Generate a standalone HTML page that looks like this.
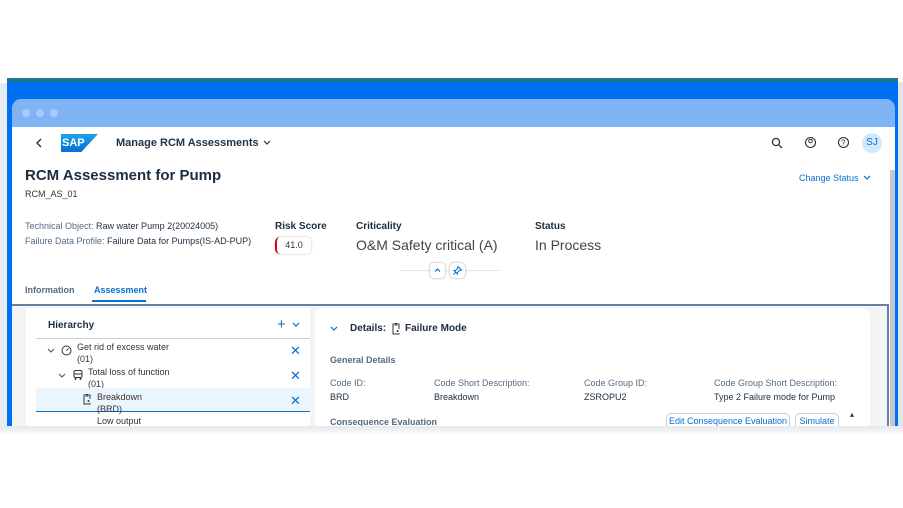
<!DOCTYPE html>
<html><head><style>
*{margin:0;padding:0;box-sizing:border-box}
body{width:903px;height:508px;background:#fff;position:relative;overflow:hidden;font-family:"Liberation Sans",Arial,sans-serif;color:#1d2d3e}
.a{position:absolute}
.lbl{font-size:9px;color:#556b82}
.val{font-size:9px;color:#1d2d3e}
.x{color:#0a6ed1;font-size:13px}
</style></head><body>
<div class="a" style="left:0;top:83px;width:8px;height:345px;background:#e8ecf0"></div>
<div class="a" style="left:7px;top:78px;width:891px;height:4px;background:#1a7a8a"></div>
<div class="a" style="left:7px;top:82px;width:891px;height:344px;background:#0070f2"></div>
<div class="a" style="left:898px;top:82px;width:5px;height:344px;background:#dfe5ec"></div>
<div class="a" style="left:12px;top:99px;width:883px;height:28px;background:#80b3f3;border-radius:9px 9px 0 0"></div>
<div class="a" style="left:22px;top:109px;width:8px;height:8px;border-radius:50%;background:#a9caf6"></div>
<div class="a" style="left:36px;top:109px;width:8px;height:8px;border-radius:50%;background:#a9caf6"></div>
<div class="a" style="left:50px;top:109px;width:8px;height:8px;border-radius:50%;background:#a9caf6"></div>
<div class="a" style="left:12px;top:127px;width:883px;height:299px;background:#fff"></div>
<div class="a" style="left:890px;top:170px;width:5px;height:256px;background:#c4c8cc"></div>
<!-- shell -->
<svg class="a" style="left:35px;top:138px" width="8" height="10"><path d="M6 1L2 5L6 9" fill="none" stroke="#333" stroke-width="1.4"/></svg>
<div class="a" style="left:61px;top:134px;width:37px;height:18px;background:linear-gradient(#1ba4e8,#0a6ed1);clip-path:polygon(0 0,100% 0,55% 100%,0 100%);color:#fff;font-weight:bold;font-size:11px;padding:3px 0 0 1px">SAP</div>
<div class="a" style="left:116px;top:137px;font-size:11px;font-weight:bold;color:#223548;white-space:nowrap">Manage RCM Assessments</div>
<svg class="a" style="left:263px;top:140px" width="8" height="6"><path d="M1 1L4 4L7 1" fill="none" stroke="#333" stroke-width="1.2"/></svg>
<svg class="a" style="left:771px;top:137px" width="12" height="12"><circle cx="5" cy="5" r="3.6" fill="none" stroke="#333" stroke-width="1.3"/><line x1="8" y1="8" x2="11" y2="11" stroke="#333" stroke-width="1.3"/></svg>
<svg class="a" style="left:804px;top:136px" width="13" height="13"><circle cx="6.5" cy="6.5" r="5" fill="none" stroke="#333" stroke-width="1.1"/><circle cx="6.5" cy="5" r="1.8" fill="none" stroke="#333"/></svg>
<svg class="a" style="left:837px;top:136px" width="13" height="13"><circle cx="6.5" cy="6.5" r="5" fill="none" stroke="#333" stroke-width="1.1"/><text x="4" y="9.5" font-size="8" fill="#333" font-family="Liberation Sans">?</text></svg>
<div class="a" style="left:862px;top:133px;width:20px;height:20px;border-radius:50%;background:#d1e8ff;color:#0a6ed1;font-size:10px;text-align:center;line-height:20px">SJ</div>
<!-- header -->
<div class="a" style="left:25px;top:167px;font-size:15px;font-weight:bold;color:#1d2d3e">RCM Assessment for Pump</div>
<div class="a" style="left:25px;top:189px;font-size:9px;color:#333">RCM_AS_01</div>
<div class="a" style="left:799px;top:173px;font-size:9px;color:#0a6ed1">Change Status</div>
<svg class="a" style="left:863px;top:175px" width="8" height="6"><path d="M1 1L4 4L7 1" fill="none" stroke="#0a6ed1" stroke-width="1.2"/></svg>
<div class="a lbl" style="left:25px;top:221px">Technical Object: <span class="val">Raw water Pump 2(20024005)</span></div>
<div class="a lbl" style="left:25px;top:236px">Failure Data Profile: <span class="val">Failure Data for Pumps(IS-AD-PUP)</span></div>
<div class="a" style="left:275px;top:221px;font-size:10px;font-weight:bold">Risk Score</div>
<div class="a" style="left:275px;top:237px;width:36px;height:17px;border-radius:5px;border-left:2px solid #d20a0a;box-shadow:0 0 2px #bbb;font-size:9px;text-align:center;line-height:17px;color:#333">41.0</div>
<div class="a" style="left:356px;top:221px;font-size:10px;font-weight:bold">Criticality</div>
<div class="a" style="left:356px;top:237px;font-size:14px;color:#444">O&amp;M Safety critical (A)</div>
<div class="a" style="left:535px;top:221px;font-size:10px;font-weight:bold">Status</div>
<div class="a" style="left:535px;top:237px;font-size:14px;color:#444">In Process</div>
<div class="a" style="left:400px;top:270px;width:100px;height:1px;background:#e5e5e5"></div>
<div class="a" style="left:430px;top:263px;width:15px;height:15px;border-radius:4px;background:#fff;box-shadow:0 0 2px #999"><svg width="15" height="15"><path d="M5 8.5L7.5 6L10 8.5" fill="none" stroke="#0a6ed1" stroke-width="1.2"/></svg></div>
<div class="a" style="left:450px;top:263px;width:15px;height:15px;border-radius:4px;background:#fff;box-shadow:0 0 2px #999"><svg width="15" height="15"><path d="M8 3.5L11.5 7L9.5 7.5L7.5 9.5L7.5 11L4 7.5L5.5 7.5L7.5 5.5Z M5.7 9.3L3.5 11.5" fill="none" stroke="#0a6ed1" stroke-width="1"/></svg></div>
<div class="a" style="left:25px;top:285px;font-size:9px;font-weight:bold;color:#556b82">Information</div>
<div class="a" style="left:94px;top:285px;font-size:9px;font-weight:bold;color:#0a6ed1">Assessment</div>
<div class="a" style="left:92px;top:300px;width:54px;height:2px;background:#0a6ed1"></div>
<div class="a" style="left:12px;top:304px;width:877px;height:2px;background:#6a7fa6"></div>
<div class="a" style="left:887px;top:304px;width:2px;height:122px;background:#6a7fa6"></div>
<!-- panels -->
<div class="a" style="left:12px;top:306px;width:875px;height:120px;background:#f3f4f6"></div>
<div class="a" style="left:26px;top:308px;width:284px;height:118px;background:#fff"></div>
<div class="a" style="left:315px;top:308px;width:555px;height:118px;background:#fff;border-radius:8px 8px 0 0"></div>
<div class="a" style="left:48px;top:320px;font-size:10px;font-weight:bold">Hierarchy</div>
<div class="a" style="left:277px;top:316px;font-size:15px;color:#0a6ed1">+</div>
<svg class="a" style="left:292px;top:322px" width="8" height="6"><path d="M1 1L4 4L7 1" fill="none" stroke="#0a6ed1" stroke-width="1.2"/></svg>
<div class="a" style="left:36px;top:338px;width:274px;height:1px;background:#ccc"></div>
<svg class="a" style="left:47px;top:348px" width="8" height="6"><path d="M1 1L4 4L7 1" fill="none" stroke="#555" stroke-width="1.1"/></svg>
<svg class="a" style="left:61px;top:345px" width="11" height="11"><circle cx="5.5" cy="5.5" r="4.5" fill="none" stroke="#333"/><line x1="5.5" y1="5.5" x2="7.5" y2="3.5" stroke="#333"/></svg>
<div class="a" style="left:77px;top:341px;font-size:9px;color:#333;line-height:12px">Get rid of excess water<br>(01)</div>
<div class="a x" style="left:290px;top:343px">✕</div>
<svg class="a" style="left:58px;top:373px" width="8" height="6"><path d="M1 1L4 4L7 1" fill="none" stroke="#555" stroke-width="1.1"/></svg>
<svg class="a" style="left:72px;top:369px" width="12" height="12"><rect x="2" y="1.5" width="8" height="7" rx="1.5" fill="none" stroke="#333"/><line x1="2" y1="5" x2="10" y2="5" stroke="#333"/><circle cx="3.5" cy="10" r="1" fill="#333"/><circle cx="8.5" cy="10" r="1" fill="#333"/></svg>
<div class="a" style="left:88px;top:366px;font-size:9px;color:#333;line-height:12px">Total loss of function<br>(01)</div>
<div class="a x" style="left:290px;top:368px">✕</div>
<div class="a" style="left:36px;top:388px;width:274px;height:24px;background:#ebf5fe;border-bottom:1px solid #0a6ed1"></div>
<svg class="a" style="left:82px;top:393px" width="10" height="12"><path d="M3 2H2V11H8V10 M7 2H8V6 M4 1.5H6V3H4Z" fill="none" stroke="#333"/><circle cx="6.5" cy="8" r="1" fill="#333"/></svg>
<div class="a" style="left:97px;top:391px;font-size:9px;color:#333;line-height:12px">Breakdown<br>(BRD)</div>
<div class="a x" style="left:290px;top:393px">✕</div>
<div class="a" style="left:97px;top:416px;font-size:9px;color:#333">Low output</div>
<svg class="a" style="left:330px;top:326px" width="8" height="6"><path d="M1 1L4 4L7 1" fill="none" stroke="#0a6ed1" stroke-width="1.2"/></svg>
<div class="a" style="left:350px;top:323px;font-size:10px;font-weight:bold">Details:</div>
<svg class="a" style="left:391px;top:322px" width="10" height="13"><path d="M3 2H2V12H8V11 M7 2H8V7 M4 1.5H6V3H4Z" fill="none" stroke="#333"/><circle cx="6.5" cy="9" r="1" fill="#333"/></svg>
<div class="a" style="left:405px;top:323px;font-size:10px;font-weight:bold">Failure Mode</div>
<div class="a" style="left:330px;top:355px;font-size:9px;font-weight:bold;color:#556b82">General Details</div>
<div class="a lbl" style="left:330px;top:378px">Code ID:</div><div class="a val" style="left:330px;top:392px">BRD</div>
<div class="a lbl" style="left:434px;top:378px">Code Short Description:</div><div class="a val" style="left:434px;top:392px">Breakdown</div>
<div class="a lbl" style="left:584px;top:378px">Code Group ID:</div><div class="a val" style="left:584px;top:392px">ZSROPU2</div>
<div class="a lbl" style="left:714px;top:378px">Code Group Short Description:</div><div class="a val" style="left:714px;top:392px">Type 2 Failure mode for Pump</div>
<div class="a" style="left:330px;top:417px;font-size:9px;font-weight:bold;color:#556b82">Consequence Evaluation</div>
<div class="a" style="left:666px;top:413px;width:124px;height:14px;border:1px solid #ccc;border-bottom:none;border-radius:5px 5px 0 0;font-size:9px;color:#0a6ed1;text-align:center;line-height:14px">Edit Consequence Evaluation</div>
<div class="a" style="left:795px;top:413px;width:44px;height:14px;border:1px solid #ccc;border-bottom:none;border-radius:5px 5px 0 0;font-size:9px;color:#0a6ed1;text-align:center;line-height:14px">Simulate</div>
<div class="a" style="left:850px;top:410px;font-size:8px;color:#333">▴</div>
<div class="a" style="left:0;top:426px;width:903px;height:10px;background:linear-gradient(#e6e8ea,#fff)"></div>
</body></html>
